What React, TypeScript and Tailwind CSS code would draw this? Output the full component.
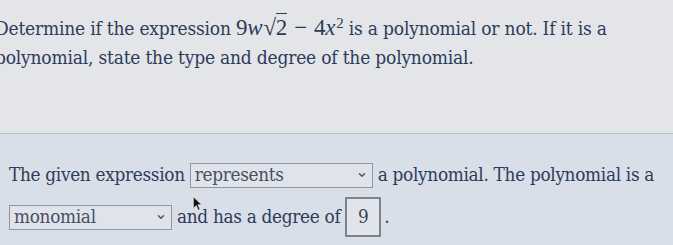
import { ChevronDown } from 'lucide-react'

const serif = { fontFamily: '"DejaVu Serif Condensed", "Liberation Serif", serif' }

function Select({ value, width }: { value: string; width: string }) {
  return (
    <span
      className={`inline-flex items-center justify-between h-[25px] border border-[#8f97a3] bg-[#e0e4ea] pl-[4px] pr-[5px] ${width}`}
    >
      <span className="text-[#465063] leading-none">{value}</span>
      <ChevronDown size={10} strokeWidth={3.5} className="text-[#4a5563]" />
    </span>
  )
}

function Cursor() {
  return (
    <svg viewBox="0 0 12 18" className="absolute left-[192px] top-[196px] w-[11px] h-[15px]">
      <path d="M1 1 L1 15 L4.5 11.5 L7 17 L9 16 L6.6 10.6 L11 10.6 Z" fill="#111" stroke="#f1f1f1" strokeWidth="0.8" />
    </svg>
  )
}

// 9w√2 − 4x²
function Expr() {
  return (
    <span className="font-['Liberation_Serif'] text-[23px] whitespace-nowrap">
      9<i className="mr-[1px]">w</i>
      <span>√</span>
      <span className="border-t-[1.5px] border-[#2d3b5a] pt-[1px]">2</span>
      <span className="mx-[7px]">−</span>
      4<i>x</i>
      <sup className="text-[15px] ml-[1px]">2</sup>
    </span>
  )
}

export default function App() {
  return (
    <div className="relative w-[673px] h-[245px] overflow-hidden text-[#2d3b5a]" style={serif}>
      <div className="bg-[#e3e5e9] h-[133px] pt-[13px] -ml-[5px] pr-4 text-[19px]">
        <p className="leading-[29px] tracking-[-0.2px]">
          Determine if the expression <Expr /> is a polynomial or not. If it is a polynomial, state the type and
          degree of the polynomial.
        </p>
      </div>
      <div className="h-px bg-[#b7c0cd]" />
      <div className="bg-[#d9dfe8] h-[111px] pt-[26px] pl-[9px] text-[18.8px] tracking-[-0.3px]">
        <div className="flex items-center gap-[5px] h-[30px]">
          <span>The given expression</span>
          <Select value="represents" width="w-[183px]" />
          <span>a polynomial. The polynomial is a</span>
        </div>
        <div className="flex items-center gap-[5px] mt-[7px] h-[40px]">
          <Select value="monomial" width="w-[163px]" />
          <span>and has a degree of</span>
          <span className="inline-flex items-center justify-center w-[36px] h-[40px] border-2 border-[#7b838f] bg-[#e1e5eb] text-[#3a4452]">
            9
          </span>
          <span className="-ml-[2px]">.</span>
        </div>
      </div>
      <Cursor />
    </div>
  )
}
